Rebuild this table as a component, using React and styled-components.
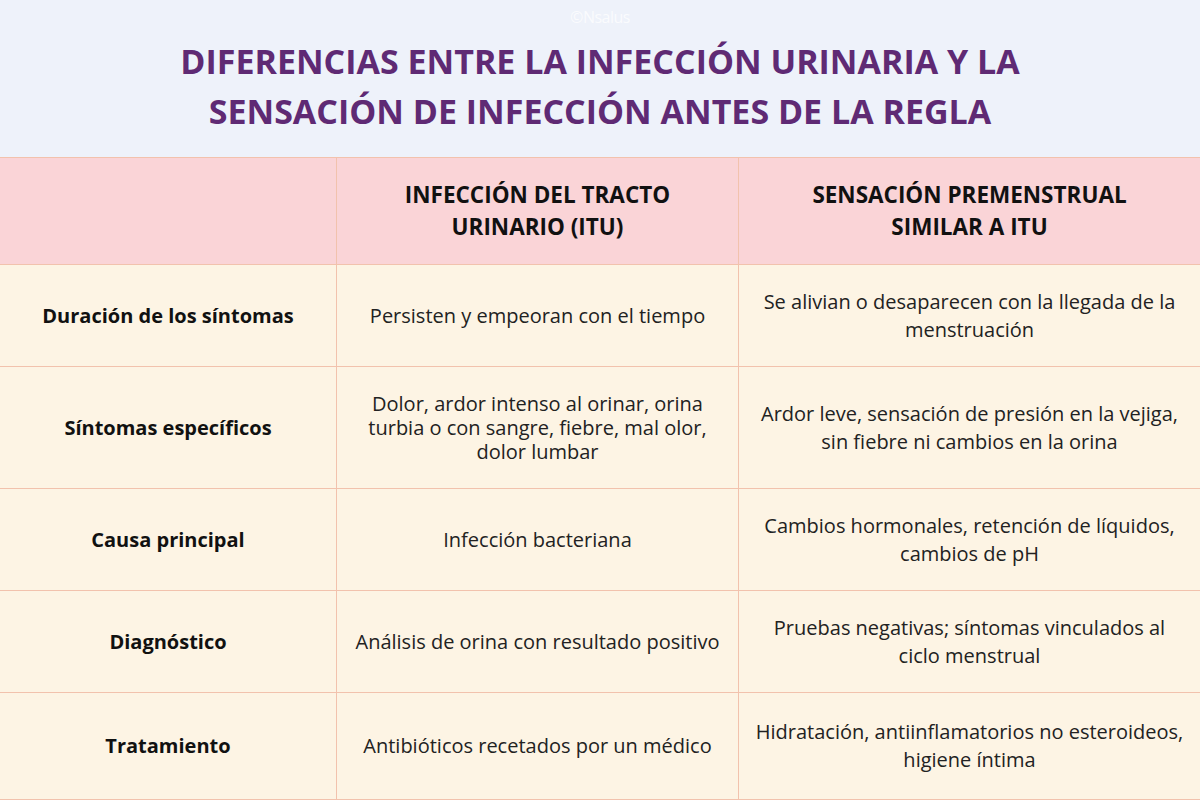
import React from 'react'
import styled, { createGlobalStyle } from 'styled-components'

const GlobalStyle = createGlobalStyle`
  html, body {
    margin: 0;
    padding: 0;
    width: 1200px;
    height: 800px;
    overflow: hidden;
    font-family: "Open Sans", "Noto Sans", sans-serif;
  }
`

const rows = [
    {
        label: 'Duración de los síntomas',
        itu: 'Persisten y empeoran con el tiempo',
        pre: 'Se alivian o desaparecen con la llegada de la menstruación',
        height: 102,
    },
    {
        label: 'Síntomas específicos',
        itu: 'Dolor, ardor intenso al orinar, orina turbia o con sangre, fiebre, mal olor, dolor lumbar',
        pre: 'Ardor leve, sensación de presión en la vejiga, sin fiebre ni cambios en la orina',
        height: 122,
        tight: true,
    },
    {
        label: 'Causa principal',
        itu: 'Infección bacteriana',
        pre: 'Cambios hormonales, retención de líquidos, cambios de pH',
        height: 102,
    },
    {
        label: 'Diagnóstico',
        itu: 'Análisis de orina con resultado positivo',
        pre: 'Pruebas negativas; síntomas vinculados al ciclo menstrual',
        height: 102,
    },
    {
        label: 'Tratamiento',
        itu: 'Antibióticos recetados por un médico',
        pre: 'Hidratación, antiinflamatorios no esteroideos, higiene íntima',
        height: 107,
    },
]

function App() {
    return (
        <>
            <GlobalStyle />
            <Page>
                <TitleArea>
                    <Watermark>©Nsalus</Watermark>
                    <Title>
                        DIFERENCIAS ENTRE LA INFECCIÓN URINARIA Y LA<br />
                        SENSACIÓN DE INFECCIÓN ANTES DE LA REGLA
                    </Title>
                </TitleArea>
                <Table>
                    <HeadCell />
                    <HeadCell>INFECCIÓN DEL TRACTO<br />URINARIO (ITU)</HeadCell>
                    <HeadCell>SENSACIÓN PREMENSTRUAL<br />SIMILAR A ITU</HeadCell>
                    {rows.map((row) => (
                        <React.Fragment key={row.label}>
                            <LabelCell $h={row.height}>{row.label}</LabelCell>
                            <Cell $h={row.height} $tight={row.tight}>{row.itu}</Cell>
                            <Cell $h={row.height}>{row.pre}</Cell>
                        </React.Fragment>
                    ))}
                </Table>
            </Page>
        </>
    )
}

export default App

const Page = styled.div`
    width: 1200px;
    height: 800px;
    background: #fdf4e4;
    display: flex;
    flex-direction: column;
`

const TitleArea = styled.div`
    position: relative;
    height: 158px;
    background: #eef2fa;
    display: flex;
    align-items: center;
    justify-content: center;
`

const Watermark = styled.div`
    position: absolute;
    top: 6px;
    left: 0;
    right: 0;
    text-align: center;
    font-size: 16px;
    color: #ffffff;
    opacity: 0.75;
    letter-spacing: -0.5px;
`

const Title = styled.h1`
    margin: 0;
    padding-top: 14px;
    font-size: 34px;
    line-height: 50px;
    font-weight: 700;
    color: #5f2a74;
    text-align: center;
`

const Table = styled.div`
    display: grid;
    grid-template-columns: 337px 402px 461px;
    border-top: 1px solid #f2c2ad;
`

const BaseCell = styled.div`
    box-sizing: border-box;
    display: flex;
    align-items: center;
    justify-content: center;
    text-align: center;
    border-bottom: 1px solid #f2c2ad;
    border-right: 1px solid #f2c2ad;
    &:nth-child(3n) {
        border-right: none;
    }
`

const HeadCell = styled(BaseCell)`
    height: 107px;
    background: #fad4d7;
    font-size: 22.5px;
    line-height: 32px;
    font-weight: 700;
    color: #111;
    padding: 0 12px;
`

const LabelCell = styled(BaseCell)`
    height: ${(p) => p.$h}px;
    font-size: 20px;
    line-height: 28px;
    font-weight: 700;
    color: #111;
    padding: 0 16px;
`

const Cell = styled(BaseCell)`
    height: ${(p) => p.$h}px;
    font-size: 20px;
    line-height: ${(p) => (p.$tight ? 24 : 28)}px;
    color: #222;
    padding: 0 13px;
`
